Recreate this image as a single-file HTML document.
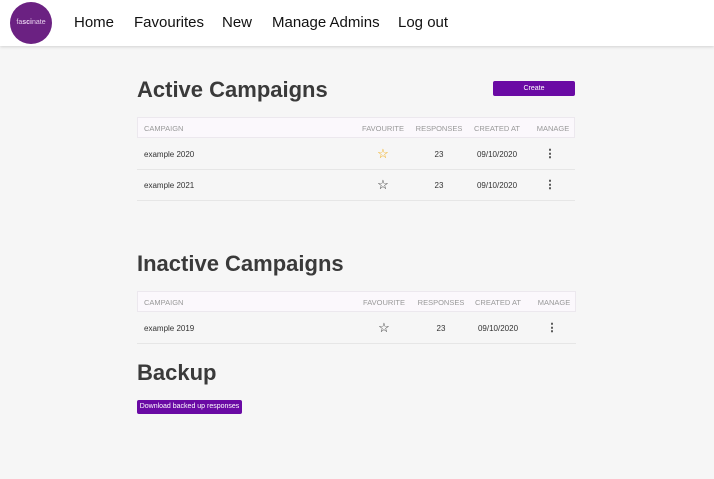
<!DOCTYPE html><html><head><style>
body{margin:0;width:714px;height:479px;background:#f6f6f6;font-family:"Liberation Sans",sans-serif;position:relative;overflow:hidden}
.hdr{position:absolute;left:0;top:0;width:714px;height:46px;background:#fff;box-shadow:0 1px 3px rgba(0,0,0,.15)}
.logo{position:absolute;left:10px;top:2px;width:42px;height:42px;border-radius:50%;background:#6b2182;color:#e8d0ee;font-size:7px;line-height:42px;text-align:center;overflow:hidden}
.nav{position:absolute;top:14px;font-size:15px;color:#111}
h1{position:absolute;margin:0;left:137px;font-size:22px;font-weight:bold;color:#3a3a3a}
.btn{position:absolute;background:#6a0aa4;color:#fff;font-size:7px;text-align:center;border-radius:2px}
.th{position:absolute;left:137px;height:21px;background:#fbf8fc;border:1px solid #ece8ee;box-sizing:border-box}
.t{position:absolute;font-size:7.5px;color:#999;transform:translateX(-50%)}
.r{position:absolute;font-size:8px;color:#333;transform:translateX(-50%)}
.t.a,.r.a{transform:none;left:144px}
.l{position:absolute;left:137px;height:1px;background:#e6e6e6}
.star{position:absolute;font-size:13px;transform:translateX(-50%)}
.dots{position:absolute;font-size:11px;font-weight:bold;color:#333;transform:translateX(-50%)}
</style></head><body>
<div class="hdr"><div class="logo">fa<b>sci</b>nate</div>
<span class="nav" style="left:74px">Home</span><span class="nav" style="left:134px">Favourites</span><span class="nav" style="left:222px">New</span><span class="nav" style="left:272px">Manage Admins</span><span class="nav" style="left:398px">Log out</span></div>
<h1 style="top:77px">Active Campaigns</h1>
<div class="btn" style="left:493px;top:81px;width:82px;height:15px;line-height:15px">Create</div>
<div class="th" style="top:117px;width:438px"></div>
<span class="t a" style="top:124px">CAMPAIGN</span><span class="t" style="left:383px;top:124px">FAVOURITE</span><span class="t" style="left:439px;top:124px">RESPONSES</span><span class="t" style="left:497px;top:124px">CREATED AT</span><span class="t" style="left:553px;top:124px">MANAGE</span>
<span class="r a" style="top:150px">example 2020</span><span class="star" style="left:383px;top:146px;color:#f0a500">☆</span><span class="r" style="left:439px;top:150px">23</span><span class="r" style="left:497px;top:150px">09/10/2020</span><span class="dots" style="left:550px;top:147px">⋮</span>
<div class="l" style="top:169px;width:438px"></div>
<span class="r a" style="top:181px">example 2021</span><span class="star" style="left:383px;top:177px;color:#222">☆</span><span class="r" style="left:439px;top:181px">23</span><span class="r" style="left:497px;top:181px">09/10/2020</span><span class="dots" style="left:550px;top:178px">⋮</span>
<div class="l" style="top:200px;width:438px"></div>
<h1 style="top:251px">Inactive Campaigns</h1>
<div class="th" style="top:291px;width:439px"></div>
<span class="t a" style="top:298px">CAMPAIGN</span><span class="t" style="left:384px;top:298px">FAVOURITE</span><span class="t" style="left:441px;top:298px">RESPONSES</span><span class="t" style="left:498px;top:298px">CREATED AT</span><span class="t" style="left:554px;top:298px">MANAGE</span>
<span class="r a" style="top:324px">example 2019</span><span class="star" style="left:384px;top:320px;color:#222">☆</span><span class="r" style="left:441px;top:324px">23</span><span class="r" style="left:498px;top:324px">09/10/2020</span><span class="dots" style="left:552px;top:321px">⋮</span>
<div class="l" style="top:343px;width:439px"></div>
<h1 style="top:360px">Backup</h1>
<div class="btn" style="left:137px;top:400px;width:105px;height:14px;line-height:14px">Download backed up responses</div>
</body></html>
